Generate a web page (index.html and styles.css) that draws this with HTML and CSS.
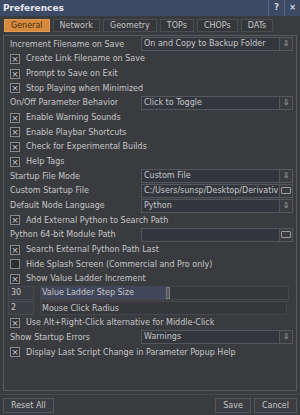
FILE: index.html
```html
<!DOCTYPE html>
<html lang="en">
<head>
  <link rel="stylesheet" href="styles.css">
</head>
<body>
  <div class="window">
    <div class="titlebar">
      <span class="title">Preferences</span>
      <span class="tbtn">?</span>
      <span class="tbtn">×</span>
    </div>
    <div class="tabs">
      <span class="tab active">General</span>
      <span class="tab">Network</span>
      <span class="tab">Geometry</span>
      <span class="tab">TOPs</span>
      <span class="tab">CHOPs</span>
      <span class="tab">DATs</span>
    </div>
    <div class="panel">
      <div class="row"><span class="label">Increment Filename on Save</span><span class="field menu">On and Copy to Backup Folder</span><span class="btn">⇩</span></div>
      <div class="row"><span class="check on"></span>Create Link Filename on Save</div>
      <div class="row"><span class="check on"></span>Prompt to Save on Exit</div>
      <div class="row"><span class="check on"></span>Stop Playing when Minimized</div>
      <div class="row"><span class="label">On/Off Parameter Behavior</span><span class="field menu">Click to Toggle</span><span class="btn">⇩</span></div>
      <div class="row"><span class="check on"></span>Enable Warning Sounds</div>
      <div class="row"><span class="check on"></span>Enable Playbar Shortcuts</div>
      <div class="row"><span class="check on"></span>Check for Experimental Builds</div>
      <div class="row"><span class="check on"></span>Help Tags</div>
      <div class="row"><span class="label">Startup File Mode</span><span class="field menu">Custom File</span><span class="btn">⇩</span></div>
      <div class="row"><span class="label">Custom Startup File</span><span class="field">C:/Users/sunsp/Desktop/Derivativ</span><span class="btn"><span class="folder"></span></span></div>
      <div class="row"><span class="label">Default Node Language</span><span class="field menu">Python</span><span class="btn">⇩</span></div>
      <div class="row"><span class="check on"></span>Add External Python to Search Path</div>
      <div class="row"><span class="label">Python 64-bit Module Path</span><span class="field"></span><span class="btn"><span class="folder"></span></span></div>
      <div class="row"><span class="check on"></span>Search External Python Path Last</div>
      <div class="row"><span class="check"></span>Hide Splash Screen (Commercial and Pro only)</div>
      <div class="row"><span class="check on"></span>Show Value Ladder Increment</div>
      <div class="row"><span class="num">30</span><span class="slider wide"><span class="fill">Value Ladder Step Size</span><span class="handle"></span></span></div>
      <div class="row"><span class="num">2</span><span class="slider short"><span class="plain">Mouse Click Radius</span></span></div>
      <div class="row"><span class="check on"></span>Use Alt+Right-Click alternative for Middle-Click</div>
      <div class="row"><span class="label">Show Startup Errors</span><span class="field menu">Warnings</span><span class="btn">⇩</span></div>
      <div class="row"><span class="check on"></span>Display Last Script Change in Parameter Popup Help</div>
    </div>
    <div class="footer">
      <span class="fbtn">Reset All</span>
      <span class="spacer"></span>
      <span class="fbtn">Save</span>
      <span class="fbtn">Cancel</span>
    </div>
  </div>
</body>
</html>
```

FILE: styles.css
```css
html, body {
  margin: 0;
  padding: 0;
  background: #38393c;
}

.window {
  width: 300px;
  height: 415px;
  display: flex;
  flex-direction: column;
  font-family: "DejaVu Sans", Verdana, sans-serif;
  font-size: 8px;
  color: #c6c6c8;
  background: #3a3b3e;
}

.titlebar {
  height: 16px;
  background: #3d4a66;
  display: flex;
  align-items: stretch;
}

.title {
  flex: 1;
  padding-left: 3px;
  line-height: 16px;
  font-weight: bold;
  font-size: 9px;
  color: #e4e6ee;
}

.tbtn {
  width: 15px;
  border-left: 1px solid #5a6680;
  text-align: center;
  line-height: 16px;
  font-weight: bold;
  color: #d8dbe4;
}

.tabs {
  display: flex;
  gap: 3px;
  padding: 3px 4px 0 4px;
  height: 13px;
}

.tab {
  padding: 0 6px;
  border: 1px solid #4c4d52;
  background: #36373a;
  line-height: 11px;
  height: 11px;
}

.tab.active {
  background: #d68a3e;
  border-color: #e09a55;
  color: #4a2e14;
}

.panel {
  margin: 3px 3px 0 3px;
  height: 353px;
  border: 1px solid #5a5b5f;
  padding: 1px 2px 0 4px;
}

.row {
  height: 14.67px;
  display: flex;
  align-items: center;
  white-space: nowrap;
  overflow: hidden;
}

.label {
  width: 131px;
  flex-shrink: 0;
  padding-left: 2px;
}

.field {
  flex: 1;
  min-width: 0;
  height: 12px;
  line-height: 12px;
  background: #34363e;
  border: 1px solid #56575c;
  padding-left: 2px;
  overflow: hidden;
  text-overflow: clip;
}

.btn {
  flex-shrink: 0;
  width: 12px;
  height: 12px;
  border: 1px solid #56575c;
  border-left: none;
  margin-right: 1px;
  background: #3b3c40;
  line-height: 12px;
  font-size: 8px;
  display: flex;
  align-items: center;
  justify-content: center;
}

.folder {
  width: 8px;
  height: 5px;
  border: 1px solid #9a9a9e;
  border-radius: 1px;
}

.check {
  width: 8px;
  height: 8px;
  border: 1px solid #8a8b8f;
  background: #2e2f33;
  margin-right: 6px;
  margin-left: 2px;
  display: flex;
  align-items: center;
  justify-content: center;
}

.check.on::after {
  content: "×";
  font-size: 9px;
  line-height: 8px;
  color: #d0d0d4;
}

.num {
  width: 22px;
  height: 12px;
  line-height: 12px;
  padding-left: 2px;
  margin-right: 6px;
  background: #3c3d42;
  border: 1px solid #4a4b50;
}

.slider {
  height: 12px;
  display: flex;
  align-items: center;
  border: 1px solid #46474c;
  background: #36373b;
}

.slider.wide {
  flex: 1;
  margin-right: 5px;
}

.slider.short {
  width: 245px;
}

.fill {
  height: 12px;
  line-height: 12px;
  width: 124px;
  padding-left: 1px;
  background: #41475a;
}

.plain {
  padding-left: 1px;
}

.handle {
  width: 2px;
  height: 10px;
  border: 1px solid #7a7b80;
  background: #55565b;
}

.footer {
  flex: 1;
  display: flex;
  align-items: center;
  gap: 3px;
  padding: 0 3px;
  border-top: 1px solid #4a4b4f;
  margin-top: 3px;
}

.spacer {
  flex: 1;
}

.fbtn {
  height: 13px;
  line-height: 13px;
  padding: 0 7px;
  border: 1px solid #56575c;
  background: #3c3d42;
  color: #c6c6c8;
}
```
